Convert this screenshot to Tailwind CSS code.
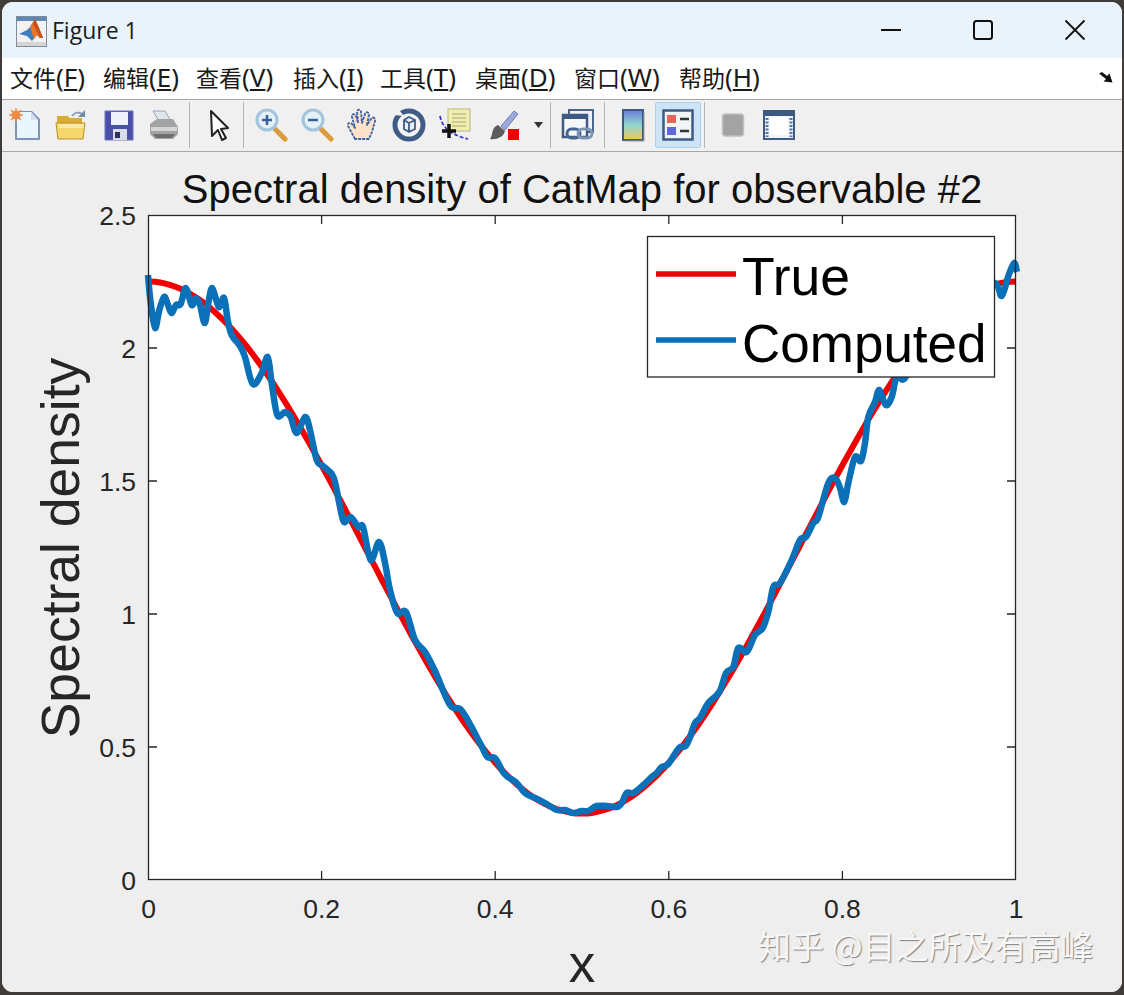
<!DOCTYPE html>
<html>
<head>
<meta charset="utf-8">
<script src="https://cdn.jsdelivr.net/npm/@tailwindcss/browser@4"></script>
</head>
<body class="m-0 w-[1124px] h-[995px] overflow-hidden bg-[#3f3c3a] pt-[2px] pl-[2px] font-['Noto_Sans','Noto_Sans_CJK_SC',sans-serif]">
<div class="w-[1120px] h-[990px] rounded-[11px] overflow-hidden flex flex-col bg-[#eeeeee]">

  <!-- title bar -->
  <div class="h-[56px] shrink-0 flex items-center bg-[#e9f3f9] pr-[1px]">
    <svg class="ml-[14px] mt-[2px] w-[31px] h-[31px]" viewBox="0 0 31 31">
      <rect x="0.5" y="0.5" width="30" height="30" fill="#f2f2f2" stroke="#7f8c99"/>
      <rect x="1" y="1" width="29" height="4" fill="#5e88b8"/>
      <path d="M3 18l8-4 3-3 5-8 4 9 4 10-3 0-3-3-5 6-5-5z" fill="#3c7fc0"/>
      <path d="M14 11l5-8 4 9 4 10-3 0-3-3-3 4z" fill="#e8762a"/>
      <path d="M17 8l2-5 4 9 4 10-3 0z" fill="#c9501a"/>
      <rect x="1" y="26" width="29" height="4" fill="#d5d5d5"/>
    </svg>
    <span class="ml-[5px] text-[23px] leading-none text-[#1c1c1c] font-['Open_Sans','Noto_Sans',sans-serif]">Figure 1</span>
    <div class="ml-auto flex items-center">
      <div class="w-[92px] h-[40px] flex items-center justify-center">
        <svg class="w-[22px] h-[4px]" viewBox="0 0 22 4"><path d="M1 2h20" stroke="#111" stroke-width="2"/></svg>
      </div>
      <div class="w-[92px] h-[40px] flex items-center justify-center">
        <svg class="w-[22px] h-[22px]" viewBox="0 0 22 22"><rect x="2" y="2" width="18" height="18" rx="2.5" fill="none" stroke="#111" stroke-width="2"/></svg>
      </div>
      <div class="w-[92px] h-[40px] flex items-center justify-center">
        <svg class="w-[22px] h-[22px]" viewBox="0 0 22 22"><path d="M1.500 1.500L20.500 20.500M20.500 1.500L1.500 20.500" stroke="#111" stroke-width="1.800"/></svg>
      </div>
    </div>
  </div>

  <!-- menu bar -->
  <div class="h-[42px] shrink-0 bg-white border-b border-[#a3a3a3] flex items-center pl-[8px] pb-[4px] text-[23px] leading-none text-[#1a1a1a] relative">
    <div class="flex items-baseline">
      <span class="w-[93px]">文件<span class="text-[26px]">(<span class="underline underline-offset-2">F</span>)</span></span>
      <span class="w-[93px]">编辑<span class="text-[26px]">(<span class="underline underline-offset-2">E</span>)</span></span>
      <span class="w-[97px]">查看<span class="text-[26px]">(<span class="underline underline-offset-2">V</span>)</span></span>
      <span class="w-[87px]">插入<span class="text-[26px]">(<span class="underline underline-offset-2">I</span>)</span></span>
      <span class="w-[95px]">工具<span class="text-[26px]">(<span class="underline underline-offset-2">T</span>)</span></span>
      <span class="w-[99px]">桌面<span class="text-[26px]">(<span class="underline underline-offset-2">D</span>)</span></span>
      <span class="w-[105px]">窗口<span class="text-[26px]">(<span class="underline underline-offset-2">W</span>)</span></span>
      <span>帮助<span class="text-[26px]">(<span class="underline underline-offset-2">H</span>)</span></span>
    </div>
    <svg class="absolute right-[8px] top-[13px] w-[16px] h-[14px]" viewBox="0 0 16 14"><path d="M1 2.500l3-1.500 5 4 2.500-2.500 3 9-9-1 2.500-2.500z" fill="#111"/></svg>
  </div>

  <!-- toolbar -->
  <div class="h-[52px] shrink-0 bg-[#f0f0f0] border-b border-[#a8a8a8] flex items-center pl-[7px] pb-[1px]">
    <!-- new -->
    <svg class="w-[34px] h-[34px]" viewBox="0 0 34 34">
      <path d="M6 3h17l8 8v20a1 1 0 0 1-1 1H7a1 1 0 0 1-1-1z" fill="#7f93b8"/>
      <path d="M8 4h14l7 8v18H8z" fill="#e9f6fd"/>
      <path d="M22 4v8h7z" fill="#cfe0ee"/>
      <circle cx="7" cy="7" r="4.500" fill="#ef8a45"/>
      <path d="M7 0v14M0 7h14M2 2l10 10M12 2L2 12" stroke="#ef8a45" stroke-width="1.300"/>
    </svg>
    <!-- open -->
    <svg class="ml-[11px] w-[34px] h-[34px]" viewBox="0 0 34 34">
      <path d="M3 8h11l2 2h12v20H3z" fill="#d9ac35"/>
      <path d="M2 15h29l-2 16H4z" fill="#f5d76e"/>
      <path d="M4 16h26l-.5 4H5z" fill="#fbeaa3"/>
      <path d="M2 15h29l-2 16H4z" fill="none" stroke="#b8902a"/>
      <path d="M18 8c3-4 7-4 10-2" fill="none" stroke="#8c9fb8" stroke-width="2"/>
      <path d="M31 2v7h-7z" fill="#7389a8"/>
    </svg>
    <!-- save -->
    <svg class="ml-[14px] w-[34px] h-[34px]" viewBox="0 0 34 34">
      <path d="M3 3h28v29H3z" fill="#4a4fa8"/>
      <path d="M3 3h28v29H3z" fill="none" stroke="#6c74c4"/>
      <rect x="9" y="4" width="17" height="13" fill="#eef0fb"/>
      <rect x="11" y="21" width="14" height="11" fill="#d8dbe8"/>
      <rect x="13" y="24" width="5" height="6" fill="#2e2f66"/>
    </svg>
    <!-- print -->
    <svg class="ml-[11px] w-[34px] h-[34px]" viewBox="0 0 34 34">
      <path d="M6 3h12l6 10H12z" fill="#dfe6ee" stroke="#9aa4ad"/>
      <path d="M3 16l7-5h16l5 8v7l-5 5H8l-5-5z" fill="#a3a3a3"/>
      <path d="M4 19h26v4H4z" fill="#d4d4d4"/>
      <path d="M6 26h22l-3 4H9z" fill="#6e6e6e"/>
    </svg>
    <div class="ml-[8px] w-px h-[46px] bg-[#b3b3b3]"></div>
    <!-- pointer -->
    <svg class="ml-[17px] w-[24px] h-[34px]" viewBox="0 0 24 34">
      <path d="M4 3l17 17-7 1 5 9-4 2-4-10-6 6z" fill="#fff" stroke="#222" stroke-width="2" stroke-linejoin="round"/>
    </svg>
    <div class="ml-[12px] w-px h-[46px] bg-[#b3b3b3]"></div>
    <!-- zoom in -->
    <svg class="ml-[10px] w-[34px] h-[34px]" viewBox="0 0 34 34">
      <path d="M19 19l12 12" stroke="#dc9a3a" stroke-width="5" stroke-linecap="round"/>
      <circle cx="13" cy="12" r="10" fill="#e4f1f9" stroke="#a3c4dc" stroke-width="3"/>
      <path d="M13 7v10M8 12h10" stroke="#3b5f9c" stroke-width="2.500"/>
    </svg>
    <!-- zoom out -->
    <svg class="ml-[12px] w-[34px] h-[34px]" viewBox="0 0 34 34">
      <path d="M19 19l12 12" stroke="#dc9a3a" stroke-width="5" stroke-linecap="round"/>
      <circle cx="13" cy="12" r="10" fill="#e4f1f9" stroke="#a3c4dc" stroke-width="3"/>
      <path d="M8 12h10" stroke="#3b5f9c" stroke-width="2.500"/>
    </svg>
    <!-- hand -->
    <svg class="ml-[12px] w-[34px] h-[34px]" viewBox="0 0 34 34">
      <path d="M9 31l-7-13c-1-3 2-4 4-2l3 4-3-11c-1-3 3-4 4-1l2 7-1-11c0-3 4-3 4 0l1 11 3-9c1-3 4-2 4 1l-2 10 4-6c1-3 5-1 4 2l-3 11-3 7z" fill="#fbe2c8" stroke="#3f5fa8" stroke-width="1.800" stroke-dasharray="3 1" stroke-linejoin="round"/>
    </svg>
    <!-- rotate -->
    <svg class="ml-[12px] w-[34px] h-[34px]" viewBox="0 0 34 34">
      <circle cx="17" cy="17" r="14" fill="#f3f3f3" stroke="#3e5c85" stroke-width="5"/>
      <path d="M1 7l6-5 5 6z" fill="#f0f0f0"/>
      <path d="M12 12l5-3 6 3v9l-6 3-5-3zM12 12l5 3 6-3M17 15v9" fill="#e8eef4" stroke="#3e5c85" stroke-width="1.800"/>
    </svg>
    <!-- data cursor -->
    <svg class="ml-[12px] w-[34px] h-[34px]" viewBox="0 0 34 34">
      <path d="M2 8c2 10 8 18 28 23" fill="none" stroke="#3535c8" stroke-width="1.800" stroke-dasharray="4 2"/>
      <rect x="10" y="1" width="22" height="22" fill="#f0eeb0" stroke="#b9b77d"/>
      <path d="M14 6h14M14 10h14M14 14h14M14 18h14" stroke="#a8a670"/>
      <path d="M11 16v14M4 23h14" stroke="#111" stroke-width="3.500"/>
    </svg>
    <!-- brush -->
    <svg class="ml-[15px] w-[34px] h-[34px]" viewBox="0 0 34 34">
      <path d="M14 18L27 3l4 3-13 16z" fill="#9aa9dd" stroke="#6f7fb5"/>
      <path d="M11 17l7 6c-1 6-9 9-15 8 2-3 2-6 3-9 1-3 3-4 5-5z" fill="#5c5c5c"/>
      <rect x="21" y="21" width="11" height="11" fill="#f00000"/>
    </svg>
    <svg class="ml-[12px] w-[11px] h-[8px]" viewBox="0 0 11 8"><path d="M1 1h9L5.500 7z" fill="#333"/></svg>
    <div class="ml-[6px] w-px h-[46px] bg-[#b3b3b3]"></div>
    <!-- link -->
    <svg class="ml-[10px] w-[34px] h-[34px]" viewBox="0 0 34 34">
      <rect x="8" y="2" width="24" height="22" fill="#eef2f6" stroke="#4a668d" stroke-width="2"/>
      <rect x="2" y="7" width="24" height="22" fill="#f5f7f9" stroke="#3f5a82" stroke-width="2.500"/>
      <rect x="2" y="7" width="24" height="4" fill="#3f5a82"/>
      <rect x="6" y="21" width="13" height="9" rx="4.500" fill="none" stroke="#44668f" stroke-width="3"/>
      <rect x="17" y="21" width="14" height="9" rx="4.500" fill="none" stroke="#7b97b8" stroke-width="3"/>
    </svg>
    <div class="ml-[9px] w-px h-[46px] bg-[#b3b3b3]"></div>
    <!-- colorbar -->
    <svg class="ml-[16px] w-[24px] h-[34px]" viewBox="0 0 24 34">
      <defs><linearGradient id="cb" x1="0" y1="0" x2="0" y2="1"><stop offset="0" stop-color="#6b7bd8"/><stop offset="0.500" stop-color="#8fd6d0"/><stop offset="1" stop-color="#f6c65b"/></linearGradient></defs>
      <rect x="2" y="2" width="20" height="30" fill="url(#cb)" stroke="#3f5a82" stroke-width="2"/>
      <path d="M23 4v29H4" fill="none" stroke="#9a9a9a"/>
    </svg>
    <!-- legend selected -->
    <div class="ml-[10px] w-[46px] h-[46px] flex items-center justify-center bg-[#cde4f7] border border-[#a9d2f0] rounded-[2px]">
      <svg class="w-[34px] h-[34px]" viewBox="0 0 34 34">
        <rect x="2.500" y="2.500" width="29" height="29" fill="#f2f5f8" stroke="#3f5a82" stroke-width="2.500"/>
        <rect x="6" y="7" width="9" height="8" fill="#e8645a"/>
        <rect x="6" y="19" width="9" height="8" fill="#5e68dc"/>
        <path d="M19 11h9M19 23h9" stroke="#333" stroke-width="2.500"/>
      </svg>
    </div>
    <div class="ml-[3px] w-px h-[46px] bg-[#b3b3b3]"></div>
    <!-- axes gray -->
    <svg class="ml-[14px] w-[28px] h-[34px]" viewBox="0 0 28 34">
      <rect x="3.500" y="6" width="21" height="22" rx="3" fill="#a3a3a3" stroke="#c0c0c0" stroke-width="1.500"/>
    </svg>
    <!-- plot tools -->
    <svg class="ml-[15px] w-[34px] h-[34px]" viewBox="0 0 34 34">
      <rect x="2" y="3" width="30" height="28" fill="#eef5fb" stroke="#3f5a82" stroke-width="2"/>
      <rect x="2" y="3" width="30" height="5" fill="#3f5a82"/>
      <rect x="8" y="9" width="18" height="18" fill="#fff"/>
      <path d="M5 10v19M29 10v19" stroke="#5b7499" stroke-width="3" stroke-dasharray="2 1.500"/>
    </svg>
  </div>

  <!-- figure -->
  <div class="flex-1 relative bg-[#eeeeee] font-['Liberation_Sans',sans-serif]">
    <svg class="absolute inset-0" width="1120" height="840" viewBox="2 152 1120 840" font-family="Liberation Sans, sans-serif">
      <rect x="148.500" y="215.500" width="867" height="664" fill="#fff"/>
      <path id="red" fill="none" stroke="#f00000" stroke-width="6" stroke-linejoin="round" d=""/>
      <path id="blue" fill="none" stroke="#0a70b8" stroke-width="6.500" stroke-linejoin="round" d=""/>
      <!-- axes -->
      <g stroke="#262626" stroke-width="1.300" fill="none">
        <rect x="148.500" y="215.500" width="867" height="664"/>
        <path d="M321.600 880v-9M495.200 880v-9M668.800 880v-9M842.400 880v-9M321.600 215v9M495.200 215v9M668.800 215v9M842.400 215v9"/>
        <path d="M148 747h9M148 614h9M148 481h9M148 348h9M1016 747h-9M1016 614h-9M1016 481h-9M1016 348h-9"/>
      </g>
      <g fill="#262626" font-size="26.500" text-anchor="end">
        <text x="136" y="890">0</text>
        <text x="136" y="757">0.5</text>
        <text x="136" y="624">1</text>
        <text x="136" y="491">1.5</text>
        <text x="136" y="358">2</text>
        <text x="136" y="225">2.5</text>
      </g>
      <g fill="#262626" font-size="26.500" text-anchor="middle">
        <text x="148.500" y="918">0</text>
        <text x="321.600" y="918">0.2</text>
        <text x="495.200" y="918">0.4</text>
        <text x="668.800" y="918">0.6</text>
        <text x="842.400" y="918">0.8</text>
        <text x="1016" y="918">1</text>
      </g>
      <text x="582" y="203" font-size="40" fill="#111" text-anchor="middle">Spectral density of CatMap for observable #2</text>
      <text x="582" y="982" font-size="53" fill="#262626" text-anchor="middle">x</text>
      <text transform="translate(79 548) rotate(-90)" font-size="53.500" fill="#262626" text-anchor="middle">Spectral density</text>
      <!-- legend -->
      <rect x="647.500" y="236.500" width="347" height="140.500" fill="#fff" stroke="#262626" stroke-width="1.300"/>
      <path d="M656 274h80" stroke="#f00000" stroke-width="5.500"/>
      <path d="M656 340h80" stroke="#0a70b8" stroke-width="5.500"/>
      <text x="742" y="295" font-size="53.500" fill="#000">True</text>
      <text x="742" y="362" font-size="53" fill="#000">Computed</text>
    </svg>
    <!-- watermark -->
    <span class="absolute left-[756px] top-[777px] text-[33px] leading-none whitespace-nowrap text-[#f7f7f7] [text-shadow:1px_1px_1px_rgba(0,0,0,0.45)] font-['Noto_Sans_CJK_SC','Noto_Sans',sans-serif]">知乎 @目之所及有高峰</span>
  </div>
</div>
<script>
  function spline(p) {
    var d = 'M' + p[0][0] + ' ' + p[0][1];
    for (var i = 0; i < p.length - 1; i++) {
      var a = p[Math.max(i - 1, 0)], b = p[i], c = p[i + 1], e = p[Math.min(i + 2, p.length - 1)];
      d += 'C' + (b[0] + (c[0] - a[0]) / 6).toFixed(1) + ' ' + (b[1] + (c[1] - a[1]) / 6).toFixed(1) + ' ' +
           (c[0] - (e[0] - b[0]) / 6).toFixed(1) + ' ' + (c[1] - (e[1] - b[1]) / 6).toFixed(1) + ' ' + c[0] + ' ' + c[1];
    }
    return d;
  }
  var r = [];
  for (var k = 0; k <= 80; k++) {
    r.push([+(148 + 868 * k / 80).toFixed(1), +(547.5 - 266 * Math.cos(2 * Math.PI * k / 80)).toFixed(1)]);
  }
  document.getElementById('red').setAttribute('d', spline(r));
  var p = [[148,275],[150.7,303],[155,328],[159.3,310],[164,297],[167,302],[171.3,313],[176,305],[180.7,304],[185.7,288],[191.7,305],[196,298],[200,305],[204.7,323],[208.3,303],[212.3,288],[218.7,307],[224,298],[227.7,320],[231.7,335],[240,346],[245,357],[252.7,384],[261.7,373],[267.7,357],[271.7,383],[277.3,415],[285,412],[290.7,417],[296.7,433],[305,417],[310,430],[316.7,460],[323,466],[331.7,474],[335,482],[340,507],[344,522],[350.7,517],[358.3,527],[363,527],[370.7,560],[379,542],[385,563],[390,590],[397.3,613],[406,612],[415,640],[425,652],[435,671],[450,705],[462,711],[480,743],[487.3,757],[495,758],[503,772],[508,777],[516.7,783],[525,793],[535,798],[546.7,804],[556.7,810],[565,810],[573.3,813],[581.7,811],[588,811],[596.7,806],[606.7,806],[616.7,807],[621.7,803],[626.7,793],[633.3,793],[643.3,785],[651.7,777],[656.7,773],[661.7,767],[668.3,764],[679,748],[685.7,746],[690,737],[695,723],[700,718],[708.3,703],[719.3,692],[726,673],[733.3,667],[738.3,648],[746.7,652],[755,635],[762.7,628],[768.3,612],[773.3,587],[780,583],[791.7,560],[800,540],[806,537],[813.3,523],[818.3,517],[828.3,483],[835,478],[840,488],[844.3,502],[848.3,483],[855,457],[861,461],[865,443],[868.3,417],[875,402],[879.3,390],[885.7,405],[891.7,397],[896.7,377],[905,378],[920,345],[950,305],[975,290],[995,283],[1001.700,296],[1008,277],[1014,263],[1017,272]];
  document.getElementById('blue').setAttribute('d', spline(p));
</script>
</body>
</html>
